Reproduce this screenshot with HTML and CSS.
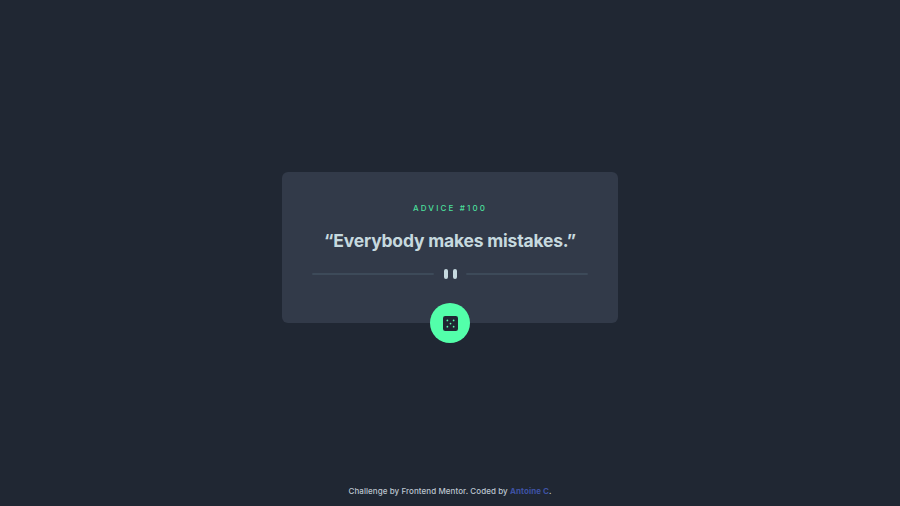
FILE: index.html
```html
<!DOCTYPE html>
<html lang="en">
<head>
  <meta charset="UTF-8" />
  <meta name="viewport" content="width=device-width, initial-scale=1.0"/>
  <title>Advice generator</title>
  <link rel="stylesheet" href="styles.css">
</head>
<body>

  <main>
    <section class="card">
      <h1 class="advice-id">ADVICE #100</h1>
      <p class="advice-text">“Everybody makes mistakes.”</p>
      <div class="divider">
        <span class="line"></span>
        <span class="pause"><i></i><i></i></span>
        <span class="line"></span>
      </div>
      <button class="dice" aria-label="New advice">
        <svg width="15" height="15" viewBox="0 0 24 24">
          <rect width="24" height="24" rx="3.5" fill="#202733"/>
          <g fill="#53ffaa">
            <circle cx="7" cy="7" r="1.4"/>
            <circle cx="17" cy="7" r="1.4"/>
            <circle cx="12" cy="12" r="1.4"/>
            <circle cx="7" cy="17" r="1.4"/>
            <circle cx="17" cy="17" r="1.4"/>
          </g>
        </svg>
      </button>
    </section>
  </main>

  <footer>
    Challenge by Frontend Mentor. Coded by <a href="#">Antoine C</a>.
  </footer>

</body>
</html>
```

FILE: styles.css
```css
:root {
  --bg-color: #202733;
  --card-bg: #323a49;
  --accent-color: #53ffaa;
  --text-color: #c6d9df;
  --line-color: #3d4a59;
}

* {
  margin: 0;
  padding: 0;
  box-sizing: border-box;
}

body {
  height: 100vh;
  display: flex;
  flex-direction: column;
  font-family: 'Inter', 'Liberation Sans', sans-serif;
  background-color: var(--bg-color);
  color: var(--text-color);
}

main {
  flex: 1;
  display: flex;
  align-items: center;
  justify-content: center;
  padding-top: 10px;
}

.card {
  position: relative;
  width: 336px;
  height: 151px;
  padding: 30px 30px 0;
  background-color: var(--card-bg);
  border-radius: 6px;
  text-align: center;
}

.advice-id {
  font-size: 8px;
  line-height: 12px;
  font-weight: 500;
  letter-spacing: 2.15px;
  color: #4bdf9b;
}

.advice-text {
  margin-top: 15px;
  font-size: 17.5px;
  line-height: 24px;
  font-weight: 700;
  letter-spacing: -0.2px;
}

.divider {
  display: flex;
  align-items: center;
  gap: 9.5px;
  margin-top: 16px;
}

.line {
  flex: 1;
  height: 2px;
  border-radius: 1px;
  background-color: var(--line-color);
}

.pause {
  display: flex;
  gap: 5px;
}

.pause i {
  width: 4px;
  height: 10px;
  border-radius: 2px;
  background-color: var(--text-color);
}

.dice {
  position: absolute;
  left: 50%;
  bottom: -20px;
  width: 40px;
  height: 40px;
  margin-left: -20px;
  display: flex;
  align-items: center;
  justify-content: center;
  border: none;
  border-radius: 50%;
  background-color: var(--accent-color);
  cursor: pointer;
}

footer {
  padding-bottom: 9px;
  text-align: center;
  font-size: 8px;
  line-height: 12px;
  font-weight: 500;
  letter-spacing: 0.07px;
  color: #bcc5cf;
}

footer a {
  color: #3e52a3;
  font-weight: 700;
  text-decoration: none;
}
```
